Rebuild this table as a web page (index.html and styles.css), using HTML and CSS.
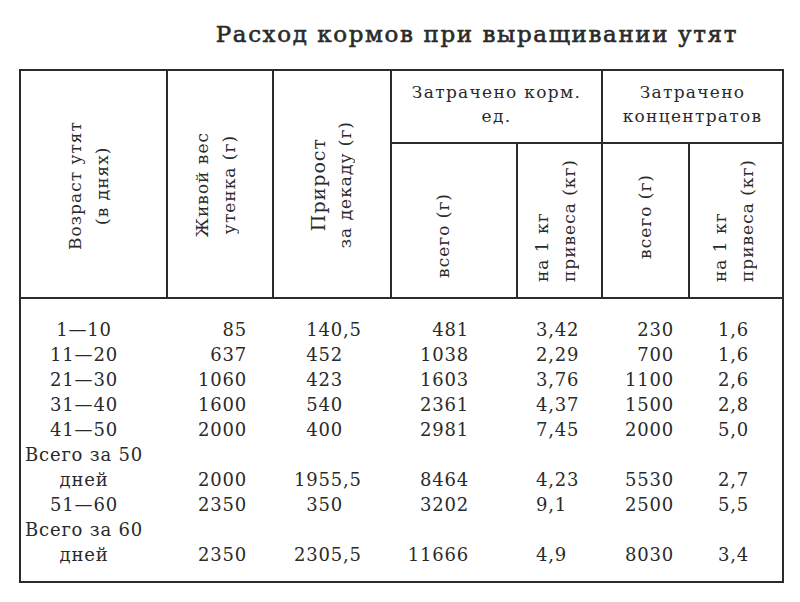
FILE: index.html
```html
<!DOCTYPE html>
<html lang="ru">
<head>
<meta charset="utf-8">
<title>Расход кормов при выращивании утят</title>
<link rel="stylesheet" href="styles.css">
</head>
<body>
<div class="page">
  <h1 class="title">Расход кормов при выращивании утят</h1>
  <table class="feed">
    <colgroup>
      <col class="c1"><col class="c2"><col class="c3"><col class="c4"><col class="c5"><col class="c6"><col class="c7">
    </colgroup>
    <thead>
      <tr class="h-top">
        <th rowspan="2" class="rot-cell tall shift-l"><div class="rot">Возраст утят<br>(в днях)</div></th>
        <th rowspan="2" class="rot-cell tall shift-l"><div class="rot">Живой вес<br>утенка (г)</div></th>
        <th rowspan="2" class="rot-cell tall"><div class="rot"><span class="big">Прирост</span><br>за декаду (г)</div></th>
        <th colspan="2" class="group">Затрачено корм.<br>ед.</th>
        <th colspan="2" class="group">Затрачено<br>концентратов</th>
      </tr>
      <tr class="h-sub">
        <th class="rot-cell sub-bottom sub-a"><div class="rot">всего (г)</div></th>
        <th class="rot-cell sub-bottom sub-b"><div class="rot rot-start">на 1 кг<br>привеса (кг)</div></th>
        <th class="rot-cell sub-mid"><div class="rot">всего (г)</div></th>
        <th class="rot-cell sub-bottom sub-d"><div class="rot rot-start">на 1 кг<br>привеса (кг)</div></th>
      </tr>
    </thead>
    <tbody>
      <tr class="first"><td class="age">1—10</td><td class="r2">85</td><td class="d3"><span class="int">140</span>,5</td><td class="r4">481</td><td class="l5">3,42</td><td class="r6">230</td><td class="l7">1,6</td></tr>
      <tr><td class="age">11—20</td><td class="r2">637</td><td class="d3"><span class="int">452</span></td><td class="r4">1038</td><td class="l5">2,29</td><td class="r6">700</td><td class="l7">1,6</td></tr>
      <tr><td class="age">21—30</td><td class="r2">1060</td><td class="d3"><span class="int">423</span></td><td class="r4">1603</td><td class="l5">3,76</td><td class="r6">1100</td><td class="l7">2,6</td></tr>
      <tr><td class="age">31—40</td><td class="r2">1600</td><td class="d3"><span class="int">540</span></td><td class="r4">2361</td><td class="l5">4,37</td><td class="r6">1500</td><td class="l7">2,8</td></tr>
      <tr><td class="age">41—50</td><td class="r2">2000</td><td class="d3"><span class="int">400</span></td><td class="r4">2981</td><td class="l5">7,45</td><td class="r6">2000</td><td class="l7">5,0</td></tr>
      <tr><td class="age">Всего за 50<br>дней</td><td class="r2">2000</td><td class="d3"><span class="int">1955</span>,5</td><td class="r4">8464</td><td class="l5">4,23</td><td class="r6">5530</td><td class="l7">2,7</td></tr>
      <tr><td class="age">51—60</td><td class="r2">2350</td><td class="d3"><span class="int">350</span></td><td class="r4">3202</td><td class="l5">9,1</td><td class="r6">2500</td><td class="l7">5,5</td></tr>
      <tr class="last"><td class="age">Всего за 60<br>дней</td><td class="r2">2350</td><td class="d3"><span class="int">2305</span>,5</td><td class="r4">11666</td><td class="l5">4,9</td><td class="r6">8030</td><td class="l7">3,4</td></tr>
    </tbody>
  </table>
</div>
</body>
</html>
```

FILE: styles.css
```css
html, body {
  margin: 0;
  padding: 0;
  background: #ffffff;
}

.page {
  width: 800px;
  height: 602px;
  color: #2a2a2a;
  font-family: "DejaVu Serif", "Liberation Serif", serif;
}

.title {
  margin: 0;
  height: 69px;
  box-sizing: border-box;
  padding: 19px 62px 0 0;
  text-align: right;
  font-size: 23px;
  line-height: 30px;
  font-weight: normal;
  letter-spacing: 1.6px;
  -webkit-text-stroke: 0.6px #2a2a2a;
  color: #2a2a2a;
}

.feed {
  margin-left: 19px;
  border-collapse: collapse;
  table-layout: fixed;
  width: 765px;
  border: 2px solid #2b2b2b;
}

.c1 { width: 147px; }
.c2 { width: 106px; }
.c3 { width: 118px; }
.c4 { width: 126px; }
.c5 { width: 85px; }
.c6 { width: 87px; }
.c7 { width: 94px; }

.feed th {
  border: 2px solid #2b2b2b;
  padding: 0;
  font-weight: normal;
  font-size: 17px;
  line-height: 27px;
  letter-spacing: 1px;
}

.h-top { height: 73px; }
.h-sub { height: 155px; }

.feed th.group {
  vertical-align: top;
  padding-top: 9px;
  line-height: 24px;
  letter-spacing: 1.3px;
}

.rot-cell {
  vertical-align: middle;
  text-align: center;
}

.feed th.tall {
  padding-top: 10px;
}

.feed th.shift-l {
  padding-right: 9px;
}

.rot {
  display: inline-block;
  writing-mode: vertical-rl;
  transform: rotate(180deg);
  text-align: center;
}

.rot-start {
  text-align: left;
}

.big {
  font-size: 19px;
}

.feed th.sub-bottom {
  vertical-align: bottom;
  padding-bottom: 7px;
}

.feed th.sub-a {
  padding-right: 22px;
  padding-bottom: 11px;
}

.feed th.sub-b {
  padding-right: 8px;
}

.feed th.sub-d {
  padding-right: 5px;
}

.sub-mid {
  vertical-align: middle;
}

.feed td {
  padding: 0;
  font-size: 18px;
  line-height: 25px;
  letter-spacing: 0.8px;
  vertical-align: bottom;
  white-space: nowrap;
}

.feed tr.first td { padding-top: 18px; }
.feed tr.last td { padding-bottom: 14px; }

.feed td.age {
  text-align: center;
  padding-right: 20px;
}

.feed td.r2 { text-align: right; padding-right: 26px; }
.feed td.d3 { text-align: left; padding-left: 20px; }
.int { display: inline-block; width: 50px; text-align: right; }
.feed td.r4 { text-align: right; padding-right: 48px; }
.feed td.l5 { text-align: left; padding-left: 19px; }
.feed td.r6 { text-align: right; padding-right: 15px; }
.feed td.l7 { text-align: left; padding-left: 29px; }
```
